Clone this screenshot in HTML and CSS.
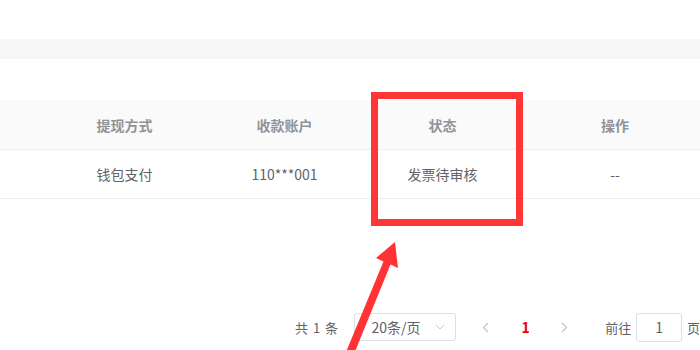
FILE: index.html
```html
<!DOCTYPE html>
<html lang="zh-CN">
<head>
  <meta charset="UTF-8">
  <meta name="viewport" content="width=device-width, initial-scale=1.0">
  <title>提现记录</title>
  <link rel="stylesheet" href="styles.css">
</head>
<body>
  <div class="page">
    <div class="top-space"></div>
    <div class="divider-band"></div>

    <!-- 提现记录表格 -->
    <div class="table">
      <div class="row head">
        <div class="cell"></div>
        <div class="cell">提现方式</div>
        <div class="cell">收款账户</div>
        <div class="cell">状态</div>
        <div class="cell">操作</div>
      </div>
      <div class="row body">
        <div class="cell"></div>
        <div class="cell">钱包支付</div>
        <div class="cell">110***001</div>
        <div class="cell">发票待审核</div>
        <div class="cell">--</div>
      </div>
    </div>

    <!-- 分页 -->
    <div class="pagination">
      <span class="total">共 1 条</span>
      <div class="sizes">
        <span>20条/页</span>
        <svg class="arrow-down" width="10" height="6" viewBox="0 0 10 6"><polyline points="1,1 5,5 9,1" fill="none" stroke="#c0c4cc" stroke-width="1"/></svg>
      </div>
      <button class="btn-nav btn-prev">
        <svg width="7" height="11" viewBox="0 0 7 11"><polyline points="6,1 1.5,5.5 6,10" fill="none" stroke="#c0c4cc" stroke-width="1.2"/></svg>
      </button>
      <span class="pager-num">1</span>
      <button class="btn-nav">
        <svg width="7" height="11" viewBox="0 0 7 11"><polyline points="1,1 5.5,5.5 1,10" fill="none" stroke="#c0c4cc" stroke-width="1.2"/></svg>
      </button>
      <span class="jump-label jump-first">前往</span>
      <div class="jump-input">1</div>
      <span class="jump-label">页</span>
    </div>

    <!-- 标注 -->
    <div class="mark-box"></div>
    <svg class="mark-arrow" width="700" height="350" viewBox="0 0 700 350">
      <polygon points="395,242 376,258 383.5,261.5 346,352 354,354 390.5,264.5 398,268" fill="#ff3333"/>
    </svg>
  </div>
</body>
</html>
```

FILE: styles.css
```css
body {
  margin: 0;
  background: #fff;
  font-family: "Noto Sans CJK SC", "Noto Sans", sans-serif;
  overflow: hidden;
}

.page {
  position: relative;
  width: 700px;
  height: 350px;
  overflow: hidden;
}

.top-space {
  height: 39px;
}

.divider-band {
  height: 20px;
  background-color: #f7f7f7;
}

.table {
  margin-top: 41px;
  width: 720px;
}

.row {
  display: grid;
  grid-template-columns: 44px 161px 159px 157px 188px;
  border-bottom: 1px solid #ebeef5;
}

.row.head {
  height: 49px;
  background-color: #fafafa;
  color: #909399;
  font-weight: bold;
}

.row.body {
  height: 48px;
  color: #606266;
}

.cell {
  display: flex;
  align-items: center;
  justify-content: center;
  font-size: 14px;
}

.pagination {
  display: flex;
  align-items: center;
  margin-top: 114px;
  padding-left: 295px;
  height: 28px;
  font-size: 13px;
  color: #606266;
  white-space: nowrap;
}

.total {
  width: 59px;
  word-spacing: 2px;
}

.sizes {
  display: flex;
  align-items: center;
  justify-content: space-between;
  box-sizing: border-box;
  width: 103px;
  height: 28px;
  padding: 0 10px 0 17px;
  border: 1px solid #dcdfe6;
  border-radius: 3px;
  font-size: 14px;
}

.btn-nav {
  display: flex;
  align-items: center;
  justify-content: center;
  width: 30px;
  height: 28px;
  padding: 0;
  border: none;
  background: none;
}

.btn-prev {
  margin-left: 15px;
}

.pager-num {
  width: 30px;
  margin: 0 9px 0 10px;
  text-align: center;
  color: #e60012;
  font-weight: bold;
  font-size: 14px;
}

.jump-label {
  margin-left: 5px;
}

.jump-first {
  margin-left: 26px;
}

.jump-input {
  box-sizing: border-box;
  width: 46px;
  height: 29px;
  margin-left: 5px;
  border: 1px solid #dcdfe6;
  border-radius: 3px;
  line-height: 27px;
  text-align: center;
  font-size: 14px;
}

.mark-box {
  position: absolute;
  left: 371px;
  top: 92px;
  width: 138px;
  height: 120px;
  border: 7px solid #ff3636;
}

.mark-arrow {
  position: absolute;
  left: 0;
  top: 0;
}
```
